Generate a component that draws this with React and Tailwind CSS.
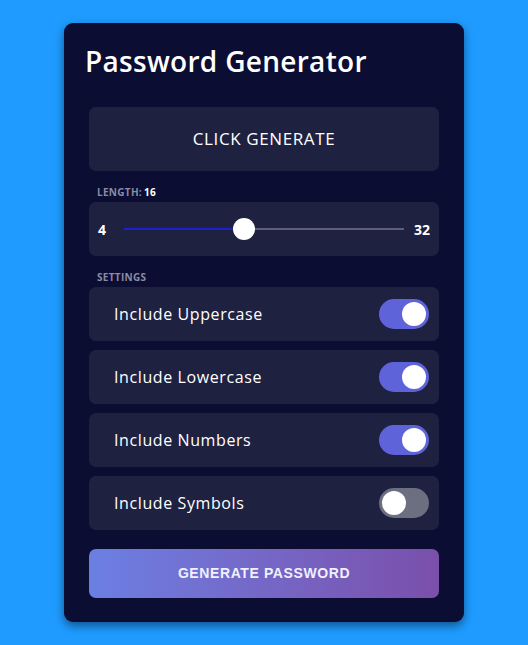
const options = [
  { label: "Include Uppercase", on: true },
  { label: "Include Lowercase", on: true },
  { label: "Include Numbers", on: true },
  { label: "Include Symbols", on: false },
];

const Toggle = ({ on }) => (
  <div
    className={`relative h-[30px] w-[50px] rounded-full ${
      on ? "bg-[#5f63d9]" : "bg-[#6c6f80]"
    }`}
  >
    <div
      className={`absolute top-[3px] h-[24px] w-[24px] rounded-full bg-white ${
        on ? "left-[23px]" : "left-[3px]"
      }`}
    />
  </div>
);

const App = () => {
  const length = 16;
  const pct = ((length - 4) / (32 - 4)) * 100;

  return (
    <div
      className="flex min-h-[645px] w-full items-start justify-center bg-[#1f9bff] pt-[23px]"
      style={{ fontFamily: '"Open Sans", "DejaVu Sans", sans-serif' }}
    >
      <div className="w-[400px] rounded-[9px] bg-[#0b0d33] px-[25px] pb-[24px] pt-[20px] shadow-[0_4px_10px_rgba(0,0,0,0.45)]">
        <h1 className="ml-[-4px] text-[28px] font-semibold leading-[36px] tracking-[0.3px] text-white">
          Password Generator
        </h1>

        {/* result */}
        <div className="mt-[28px] flex h-[64px] items-center justify-center rounded-[7px] bg-[#1f2140] text-[17px] tracking-[0.6px] text-white">
          CLICK GENERATE
        </div>

        {/* length */}
        <div className="mt-[15px] flex items-center text-[10px] font-bold leading-[12px] tracking-[0.3px]">
          <span className="ml-[8px] text-[#8a8ca3]">LENGTH:</span>
          <span className="ml-[2px] text-white">{length}</span>
        </div>
        <div className="mt-[4px] flex h-[54px] items-center rounded-[7px] bg-[#1f2140] px-[9px]">
          <span className="w-[26px] text-[14px] font-bold text-white">4</span>
          <div className="relative h-[2px] flex-1 bg-[#5d5f7a]">
            <div className="absolute left-0 top-0 h-[2px] bg-[#1b22c9]" style={{ width: `${pct}%` }} />
            <div
              className="absolute top-[-10px] ml-[-11px] h-[22px] w-[22px] rounded-full bg-white"
              style={{ left: `${pct}%` }}
            />
          </div>
          <span className="w-[26px] text-right text-[14px] font-bold text-white">32</span>
        </div>

        {/* settings */}
        <div className="mt-[14px] ml-[8px] text-[10px] font-bold leading-[14px] tracking-[0.3px] text-[#8a8ca3]">
          SETTINGS
        </div>
        <div className="mt-[3px] flex flex-col gap-[9px]">
          {options.map((o) => (
            <div
              key={o.label}
              className="flex h-[54px] items-center justify-between rounded-[7px] bg-[#1f2140] pl-[25px] pr-[10px]"
            >
              <span className="text-[16px] tracking-[0.6px] text-white">{o.label}</span>
              <Toggle on={o.on} />
            </div>
          ))}
        </div>

        <button
          className="mt-[19px] flex h-[49px] w-full items-center justify-center rounded-[7px] bg-gradient-to-r from-[#6b7fe3] to-[#7a4fab] text-[14px] font-bold tracking-[0.6px] text-[#f0f0ff]"
          style={{ fontFamily: '"Liberation Sans", Arial, sans-serif' }}
        >
          GENERATE PASSWORD
        </button>
      </div>
    </div>
  );
};

export default App;
